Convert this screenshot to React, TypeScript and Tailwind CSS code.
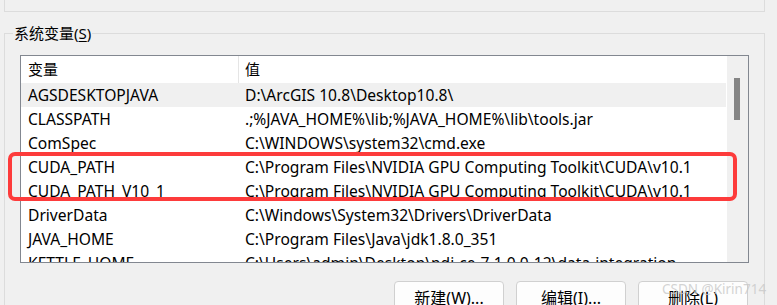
import React from "react";

const rows: [string, string][] = [
  ["AGSDESKTOPJAVA", "D:\\ArcGIS 10.8\\Desktop10.8\\"],
  ["CLASSPATH", ".;%JAVA_HOME%\\lib;%JAVA_HOME%\\lib\\tools.jar"],
  ["ComSpec", "C:\\WINDOWS\\system32\\cmd.exe"],
  ["CUDA_PATH", "C:\\Program Files\\NVIDIA GPU Computing Toolkit\\CUDA\\v10.1"],
  ["CUDA_PATH_V10_1", "C:\\Program Files\\NVIDIA GPU Computing Toolkit\\CUDA\\v10.1"],
  ["DriverData", "C:\\Windows\\System32\\Drivers\\DriverData"],
  ["JAVA_HOME", "C:\\Program Files\\Java\\jdk1.8.0_351"],
  ["KETTLE_HOME", "C:\\Users\\admin\\Desktop\\pdi-ce-7.1.0.0-12\\data-integration"],
];

const font = "font-['Noto_Sans','Noto_Sans_CJK_SC',sans-serif]";

function Btn({ label, u, rest }: { label: string; u: string; rest: string }) {
  return (
    <div className="w-[110px] h-[32px] rounded-[4px] border border-[#d0d0d0] bg-[#fdfdfd] flex justify-center pt-[6px] text-[16px] leading-[20px] text-black">
      <span>
        {label}(<span className="underline underline-offset-2">{u}</span>){rest}
      </span>
    </div>
  );
}

export default function App() {
  return (
    <div className={`w-[777px] h-[305px] bg-[#f0f0f0] overflow-hidden relative ${font} text-black`}>
      {/* upper group box remnant */}
      <div className="ml-[4px] w-[761px] h-[12px] border-l border-r border-b border-[#dcdcdc]" />
      {/* system variables group box */}
      <div className="ml-[4px] mt-[21px] w-[761px] h-[400px] border-l border-r border-t border-[#dcdcdc] pl-[15px] pr-[15px]">
        <div className="-mt-[12px] -ml-[7px] h-[22px] flex">
          <span className="bg-[#f0f0f0] px-[1px] text-[15px] leading-[22px]">
            系统变量(<span className="underline underline-offset-2">S</span>)
          </span>
        </div>
        <div className="relative mt-[11px]">
          <div className="w-[729px] h-[208px] border border-[#828790] bg-white flex overflow-hidden">
            <div className="w-[705px] flex flex-col text-[15.6px]">
              <div className="h-[27px] flex shrink-0 bg-white text-[15px]">
                <div className="w-[217px] pl-[7px] leading-[27px]">变量</div>
                <div className="w-px h-full bg-[#e5e5e5]" />
                <div className="pl-[6px] leading-[27px]">值</div>
              </div>
              {rows.map(([k, v], i) => (
                <div
                  key={k}
                  className={`h-[24px] flex shrink-0 ${i === 0 ? "bg-[#f0f0f0]" : "bg-white"}`}
                >
                  <div className="w-[218px] pl-[7px] leading-[24px] whitespace-nowrap">{k}</div>
                  <div className="pl-[6px] leading-[24px] whitespace-nowrap">{v}</div>
                </div>
              ))}
            </div>
            <div className="w-px bg-white" />
            <div className="w-[21px] bg-[#f0f0f0] pt-[22px] pl-[7px]">
              <div className="w-[6px] h-[42px] bg-[#858585]" />
            </div>
          </div>
          {/* red highlight */}
          <div className="absolute left-[-12px] top-[97px] w-[729px] h-[49px] border-[4px] border-[#fd3b3b] rounded-[7px]" />
        </div>
        <div className="mt-[18px] flex justify-end gap-[12px] pr-[1px]">
          <Btn label="新建" u="W" rest="..." />
          <Btn label="编辑" u="I" rest="..." />
          <Btn label="删除" u="L" rest="" />
        </div>
      </div>
      <div className="absolute left-[662px] top-[280px] text-[13.5px] leading-[18px] text-[#c8c8c8]/80 font-['Noto_Sans',sans-serif] whitespace-nowrap">
        CSDN @Kirin714
      </div>
    </div>
  );
}
